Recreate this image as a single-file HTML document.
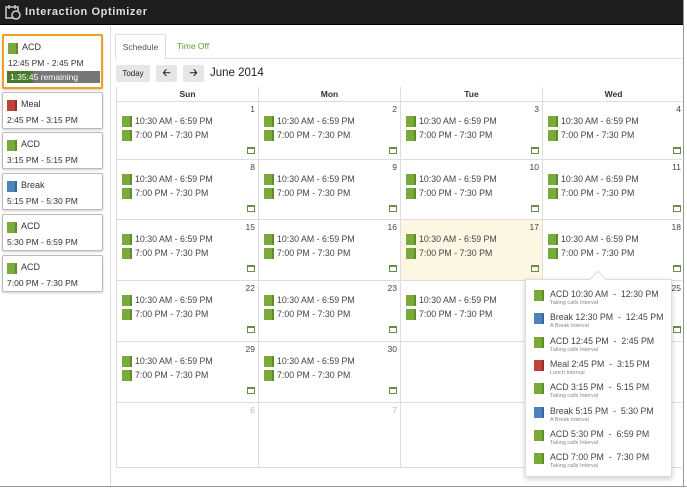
<!DOCTYPE html>
<html><head><style>
*{margin:0;padding:0;box-sizing:border-box}
body{width:687px;height:494px;overflow:hidden;background:#fff;font-family:"Liberation Sans",sans-serif;font-size:11px;color:#444;position:relative}
.a{position:absolute}
.hdr{left:0;top:0;width:687px;height:25px;background:#1e1e1e;border-bottom:1px solid #000}
.hdr span{position:absolute;left:25px;top:6px;color:#ddd;font-weight:bold;font-size:11px;letter-spacing:0.6px}
.card{position:absolute;left:2px;width:101px;border:1px solid #bbb;border-radius:2px;box-shadow:0 1px 2px #ccc;background:#fff}
.card .t{position:absolute;left:18px;top:6px;font-size:9px;color:#333}
.card .s{position:absolute;left:4px;top:22px;font-size:8.5px;color:#333}
.sq{position:absolute;width:10px;height:11px;background:#7aab3a;border-right:2px solid #5e8c28}
.r{background:#c0403a;border-right-color:#9a2c27}
.b{background:#4f82b8;border-right-color:#36679a}
.card .sq{left:4px;top:7px}
.btn{position:absolute;top:65px;height:17px;background:#e6e6e6;border-radius:2px;font-size:8px;text-align:center;line-height:17px;color:#222}
.cal{left:116px;top:87px;width:566px;height:381px;overflow:hidden;border-left:1px solid #ddd;border-bottom:1px solid #ddd}
.cell{position:absolute;width:142px;height:61px;border-right:1px solid #ddd;border-top:1px solid #ddd}
.dn{position:absolute;right:3px;top:2px;font-size:8.5px;color:#444}
.it{position:absolute;left:18px;font-size:8.8px;color:#444;white-space:nowrap}
.cell .sq{left:5px}
.ci{position:absolute;right:3px;top:45px;width:8px;height:7px;border:1px solid #6a8a50;border-top-width:2px}
.dh{position:absolute;top:0;height:14px;width:142px;text-align:center;font-size:8.5px;font-weight:bold;color:#333;line-height:14px;border-right:1px solid #ddd}
.pop{left:525px;top:279px;width:147px;height:198px;background:#fff;border:1px solid #ddd;box-shadow:0 2px 5px rgba(0,0,0,.2)}
.pi{position:absolute;left:24px;font-size:8.8px;color:#444;white-space:nowrap}
.pi small{display:block;font-size:5.5px;color:#888;margin-top:1px}
.pop .sq{left:8px}
</style></head><body>
<div class="a hdr"><svg class="a" style="left:5px;top:4px" width="16" height="16" viewBox="0 0 16 16"><rect x="1" y="3" width="12" height="11" fill="none" stroke="#ccc" stroke-width="1.5"/><line x1="4" y1="1" x2="4" y2="5" stroke="#ccc" stroke-width="1.5"/><line x1="10" y1="1" x2="10" y2="5" stroke="#ccc" stroke-width="1.5"/><circle cx="11" cy="11" r="4" fill="#1e1e1e" stroke="#ccc" stroke-width="1.5"/></svg><span>Interaction Optimizer</span></div>
<div class="a" style="left:110px;top:26px;width:1px;height:468px;background:#ddd"></div>
<div class="card" style="top:34px;height:55px;border:2px solid #f0a020"><div class="sq"></div><div class="t">ACD</div><div class="s">12:45 PM - 2:45 PM</div><div class="a" style="left:3px;top:35px;width:93px;height:12px;background:#777;color:#fff;font-size:8.5px;line-height:12px"><div class="a" style="left:0;top:0;width:26px;height:12px;background:#4a7a2a"></div><span class="a" style="left:3px">1:35:45 remaining</span></div></div>
<div class="card" style="top:92px;height:37px"><div class="sq r"></div><div class="t">Meal</div><div class="s">2:45 PM - 3:15 PM</div></div>
<div class="card" style="top:132px;height:37px"><div class="sq"></div><div class="t">ACD</div><div class="s">3:15 PM - 5:15 PM</div></div>
<div class="card" style="top:173px;height:37px"><div class="sq b"></div><div class="t">Break</div><div class="s">5:15 PM - 5:30 PM</div></div>
<div class="card" style="top:214px;height:37px"><div class="sq"></div><div class="t">ACD</div><div class="s">5:30 PM - 6:59 PM</div></div>
<div class="card" style="top:255px;height:37px"><div class="sq"></div><div class="t">ACD</div><div class="s">7:00 PM - 7:30 PM</div></div>
<div class="a" style="left:115px;top:34px;width:51px;height:25px;border:1px solid #ddd;border-bottom:none;background:#fff;font-size:8.5px;color:#555;text-align:center;line-height:24px">Schedule</div>
<div class="a" style="left:177px;top:41px;font-size:8.5px;color:#6a9a3a">Time Off</div>
<div class="a" style="left:166px;top:58px;width:516px;height:1px;background:#ddd"></div>
<div class="btn" style="left:116px;width:34px">Today</div>
<div class="btn" style="left:156px;width:21px;font-weight:bold;font-size:10px">&#129120;</div>
<div class="btn" style="left:183px;width:21px;font-weight:bold;font-size:10px">&#129122;</div>
<div class="a" style="left:210px;top:67px;font-size:11.5px;color:#222">June 2014</div>
<div class="a cal">
<div class="dh" style="left:0">Sun</div><div class="dh" style="left:142px">Mon</div><div class="dh" style="left:284px">Tue</div><div class="dh" style="left:426px">Wed</div>
<div class="cell" style="left:0;top:14px"><div class="dn">1</div><div class="sq" style="top:14px"></div><div class="it" style="top:14px">10:30 AM - 6:59 PM</div><div class="sq" style="top:28px"></div><div class="it" style="top:28px">7:00 PM - 7:30 PM</div><div class="ci"></div></div>
<div class="cell" style="left:142px;top:14px"><div class="dn">2</div><div class="sq" style="top:14px"></div><div class="it" style="top:14px">10:30 AM - 6:59 PM</div><div class="sq" style="top:28px"></div><div class="it" style="top:28px">7:00 PM - 7:30 PM</div><div class="ci"></div></div>
<div class="cell" style="left:284px;top:14px"><div class="dn">3</div><div class="sq" style="top:14px"></div><div class="it" style="top:14px">10:30 AM - 6:59 PM</div><div class="sq" style="top:28px"></div><div class="it" style="top:28px">7:00 PM - 7:30 PM</div><div class="ci"></div></div>
<div class="cell" style="left:426px;top:14px"><div class="dn">4</div><div class="sq" style="top:14px"></div><div class="it" style="top:14px">10:30 AM - 6:59 PM</div><div class="sq" style="top:28px"></div><div class="it" style="top:28px">7:00 PM - 7:30 PM</div><div class="ci"></div></div>
<div class="cell" style="left:0;top:72px"><div class="dn">8</div><div class="sq" style="top:14px"></div><div class="it" style="top:14px">10:30 AM - 6:59 PM</div><div class="sq" style="top:28px"></div><div class="it" style="top:28px">7:00 PM - 7:30 PM</div><div class="ci"></div></div>
<div class="cell" style="left:142px;top:72px"><div class="dn">9</div><div class="sq" style="top:14px"></div><div class="it" style="top:14px">10:30 AM - 6:59 PM</div><div class="sq" style="top:28px"></div><div class="it" style="top:28px">7:00 PM - 7:30 PM</div><div class="ci"></div></div>
<div class="cell" style="left:284px;top:72px"><div class="dn">10</div><div class="sq" style="top:14px"></div><div class="it" style="top:14px">10:30 AM - 6:59 PM</div><div class="sq" style="top:28px"></div><div class="it" style="top:28px">7:00 PM - 7:30 PM</div><div class="ci"></div></div>
<div class="cell" style="left:426px;top:72px"><div class="dn">11</div><div class="sq" style="top:14px"></div><div class="it" style="top:14px">10:30 AM - 6:59 PM</div><div class="sq" style="top:28px"></div><div class="it" style="top:28px">7:00 PM - 7:30 PM</div><div class="ci"></div></div>
<div class="cell" style="left:0;top:132px"><div class="dn">15</div><div class="sq" style="top:14px"></div><div class="it" style="top:14px">10:30 AM - 6:59 PM</div><div class="sq" style="top:28px"></div><div class="it" style="top:28px">7:00 PM - 7:30 PM</div><div class="ci"></div></div>
<div class="cell" style="left:142px;top:132px"><div class="dn">16</div><div class="sq" style="top:14px"></div><div class="it" style="top:14px">10:30 AM - 6:59 PM</div><div class="sq" style="top:28px"></div><div class="it" style="top:28px">7:00 PM - 7:30 PM</div><div class="ci"></div></div>
<div class="cell" style="left:284px;top:132px;background:#fcf6e2"><div class="dn">17</div><div class="sq" style="top:14px"></div><div class="it" style="top:14px">10:30 AM - 6:59 PM</div><div class="sq" style="top:28px"></div><div class="it" style="top:28px">7:00 PM - 7:30 PM</div><div class="ci"></div></div>
<div class="cell" style="left:426px;top:132px"><div class="dn">18</div><div class="sq" style="top:14px"></div><div class="it" style="top:14px">10:30 AM - 6:59 PM</div><div class="sq" style="top:28px"></div><div class="it" style="top:28px">7:00 PM - 7:30 PM</div><div class="ci"></div></div>
<div class="cell" style="left:0;top:193px"><div class="dn">22</div><div class="sq" style="top:14px"></div><div class="it" style="top:14px">10:30 AM - 6:59 PM</div><div class="sq" style="top:28px"></div><div class="it" style="top:28px">7:00 PM - 7:30 PM</div><div class="ci"></div></div>
<div class="cell" style="left:142px;top:193px"><div class="dn">23</div><div class="sq" style="top:14px"></div><div class="it" style="top:14px">10:30 AM - 6:59 PM</div><div class="sq" style="top:28px"></div><div class="it" style="top:28px">7:00 PM - 7:30 PM</div><div class="ci"></div></div>
<div class="cell" style="left:284px;top:193px"><div class="dn">24</div><div class="sq" style="top:14px"></div><div class="it" style="top:14px">10:30 AM - 6:59 PM</div><div class="sq" style="top:28px"></div><div class="it" style="top:28px">7:00 PM - 7:30 PM</div><div class="ci"></div></div>
<div class="cell" style="left:426px;top:193px"><div class="dn">25</div><div class="ci"></div></div>
<div class="cell" style="left:0;top:254px"><div class="dn">29</div><div class="sq" style="top:14px"></div><div class="it" style="top:14px">10:30 AM - 6:59 PM</div><div class="sq" style="top:28px"></div><div class="it" style="top:28px">7:00 PM - 7:30 PM</div><div class="ci"></div></div>
<div class="cell" style="left:142px;top:254px"><div class="dn">30</div><div class="sq" style="top:14px"></div><div class="it" style="top:14px">10:30 AM - 6:59 PM</div><div class="sq" style="top:28px"></div><div class="it" style="top:28px">7:00 PM - 7:30 PM</div><div class="ci"></div></div>
<div class="cell" style="left:284px;top:254px"></div>
<div class="cell" style="left:426px;top:254px"></div>
<div class="cell" style="left:0;top:315px;height:66px"><div class="dn" style="color:#bbb">6</div></div>
<div class="cell" style="left:142px;top:315px;height:66px"><div class="dn" style="color:#bbb">7</div></div>
<div class="cell" style="left:284px;top:315px;height:66px"></div>
<div class="cell" style="left:426px;top:315px;height:66px"></div>
</div>
<div class="a" style="left:592px;top:273px;width:12px;height:12px;background:#fff;border-left:1px solid #ddd;border-top:1px solid #ddd;transform:rotate(45deg);z-index:2"></div>
<div class="a pop" style="z-index:1">
<div class="sq" style="top:10px"></div><div class="pi" style="top:9px">ACD 10:30 AM &nbsp;- &nbsp;12:30 PM<small>Taking calls Interval</small></div>
<div class="sq b" style="top:33px"></div><div class="pi" style="top:32px">Break 12:30 PM &nbsp;- &nbsp;12:45 PM<small>A Break Interval</small></div>
<div class="sq" style="top:57px"></div><div class="pi" style="top:56px">ACD 12:45 PM &nbsp;- &nbsp;2:45 PM<small>Taking calls Interval</small></div>
<div class="sq r" style="top:80px"></div><div class="pi" style="top:79px">Meal 2:45 PM &nbsp;- &nbsp;3:15 PM<small>Lunch Interval</small></div>
<div class="sq" style="top:103px"></div><div class="pi" style="top:102px">ACD 3:15 PM &nbsp;- &nbsp;5:15 PM<small>Taking calls Interval</small></div>
<div class="sq b" style="top:127px"></div><div class="pi" style="top:126px">Break 5:15 PM &nbsp;- &nbsp;5:30 PM<small>A Break Interval</small></div>
<div class="sq" style="top:150px"></div><div class="pi" style="top:149px">ACD 5:30 PM &nbsp;- &nbsp;6:59 PM<small>Taking calls Interval</small></div>
<div class="sq" style="top:173px"></div><div class="pi" style="top:172px">ACD 7:00 PM &nbsp;- &nbsp;7:30 PM<small>Taking calls Interval</small></div>
</div>
<div class="a" style="left:683px;top:0;width:4px;height:494px;background:#fff;border-left:1px solid #999"></div>
<div class="a" style="left:0;top:486px;width:687px;height:8px;background:#fff;border-top:1px solid #999"></div>
</body></html>
